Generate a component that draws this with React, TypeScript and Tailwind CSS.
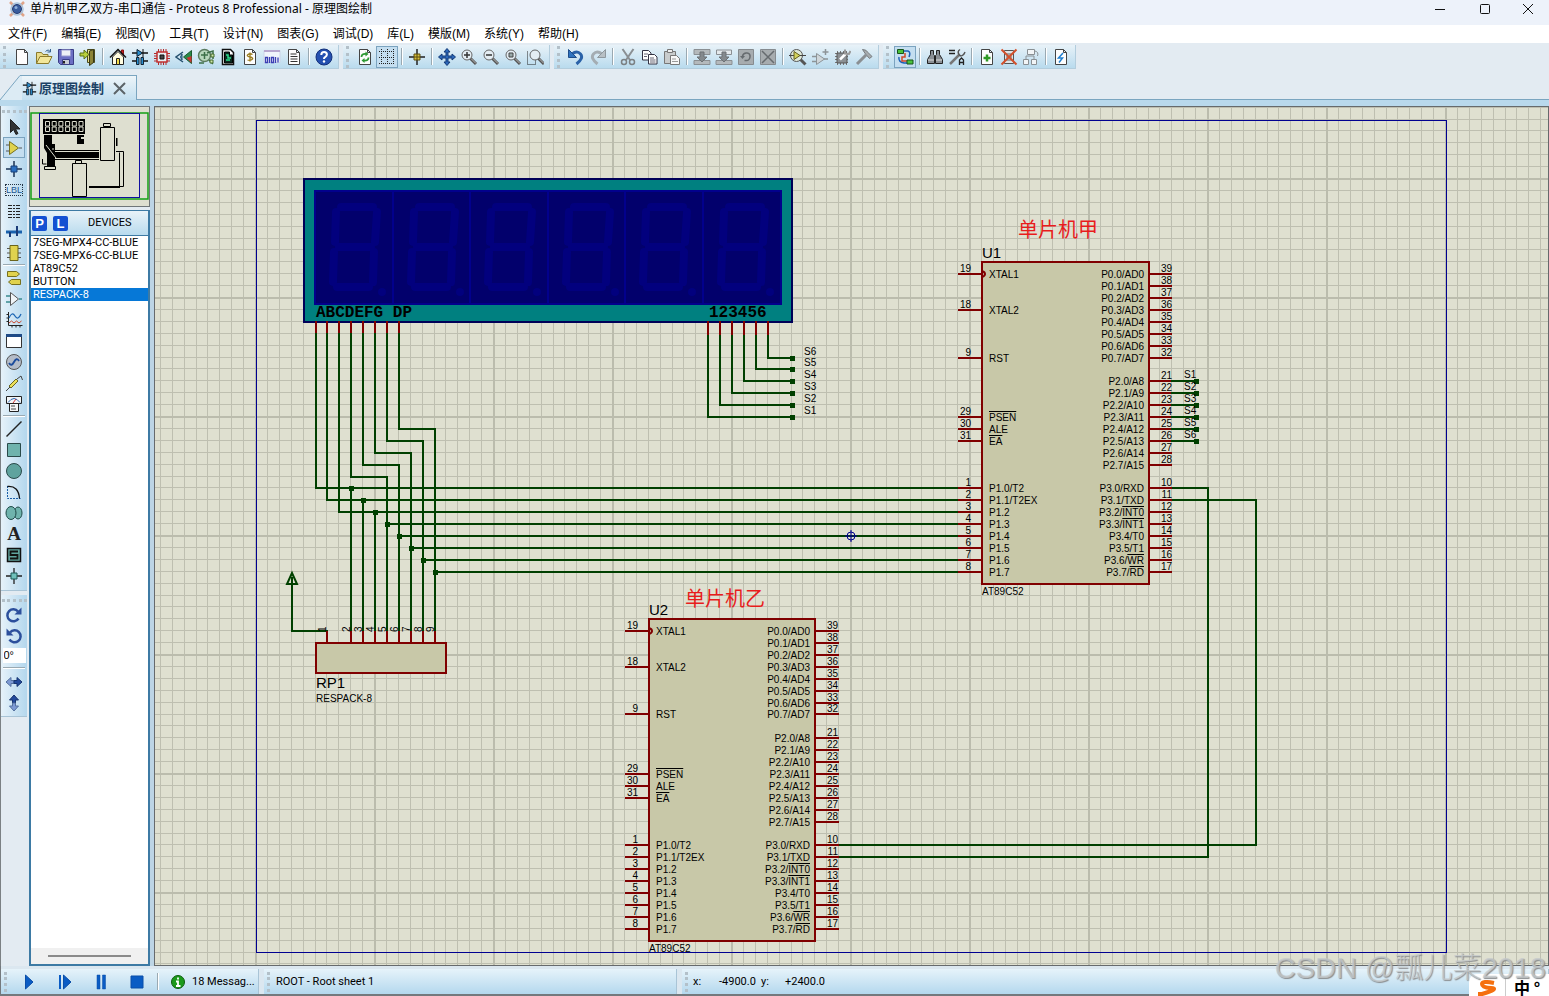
import * as React from "react";

/* ---------- icons ---------- */

function Ico({ children, size = 18 }: { children: React.ReactNode; size?: number }) {
   return (
      <svg width={size} height={size} viewBox="0 0 18 18" fill="none" stroke="#222" strokeWidth="1" aria-hidden="true" className="block shrink-0">
         {children}
      </svg>
   );
}

const page = <path d="M3.5 1.5h8l3 3v12h-11z M11.5 1.5v3h3" fill="#fdfdfd" stroke="#444" />;
const lens = (
   <>
      <path d="M10.5 10.5l5.5 5.5" stroke="#555" strokeWidth="3" />
      <path d="M11 10.5l5 5" stroke="#bbb" strokeWidth="1" />
      <circle cx="7" cy="7" r="5" fill="#e4edf3" stroke="#666" />
   </>
);

const icons: Record<string, React.ReactNode> = {
   new: page,
   open: (
      <>
         <path d="M1.5 15.5v-11h5l1.5 2h5v2" fill="#e9dc8a" stroke="#8a7a2c" />
         <path d="M1.5 15.5l3.5-7h12l-3.5 7z" fill="#f2e79b" stroke="#8a7a2c" />
         <path d="M10.5 3.5q3-3 5 .5m0-3v3h-3" stroke="#35618f" />
      </>
   ),
   save: (
      <>
         <path d="M1.5 1.5h15v15h-13l-2-2z" fill="#6c6fc4" stroke="#3a3d86" />
         <path d="M4.5 2h9v6h-9z" fill="#eef0f6" stroke="#9a9cd0" />
         <path d="M5.5 11.5h7v5h-7z" fill="#c9ccd6" stroke="#3a3d86" />
         <path d="M7 13v2.5" stroke="#222" strokeWidth="2" />
      </>
   ),
   exit: (
      <>
         <path d="M8.5 1.5h7v13h-7z" fill="#e6e08a" stroke="#4a4a1c" />
         <path d="M10.5 3l4-1.5v13l-4 3z" fill="#8c8438" stroke="#3a3a16" />
         <path d="M1 5h4v-3l5 4.5-5 4.5v-3h-4z" fill="#b8cf3c" stroke="#587016" />
      </>
   ),
   home: (
      <>
         <path d="M3.5 9v7.500h11v-7.500l-5.5-5.5z" fill="#fffce0" stroke="#222" />
         <path d="M12.5 6v-4h2v6" fill="#c22" stroke="#811" />
         <path d="M1 9.5l8-8 8 8" stroke="#111" strokeWidth="1.5" />
         <path d="M7.5 10.5h3v6h-3z" fill="#f3dd4a" />
      </>
   ),
   schem: (
      <>
         <path d="M1 5h16M1 13h5M12 13h5" stroke="#111" strokeWidth="1.5" />
         <path d="M6 1.5v7l5.5-3.5z" fill="#2a8fd0" stroke="#123" />
         <path d="M12 1v8" stroke="#111" />
         <path d="M5.5 9.500h2.500v7h-2.500zM10 9.500h2.500v7h-2.500z" fill="#2a8fd0" stroke="#123" />
      </>
   ),
   chip: (
      <>
         <path d="M5.5 1v16M8 1v16M10.5 1v16M13 1v16M1 5.5h16M1 8h16M1 10.5h16M1 13h16" stroke="#b22a2a" />
         <path d="M4 4h10v10h-10z" fill="#e9eef2" stroke="#c03030" strokeWidth="1.5" />
         <path d="M7 7h4v4h-4z" fill="#444" stroke="#111" />
      </>
   ),
   view3d: (
      <>
         <path d="M8 4l-7 5 7 5" stroke="#26506e" strokeWidth="1.5" />
         <path d="M7 6q-3 3 0 6z" fill="#5aa8dc" stroke="#26506e" />
         <path d="M16.5 2.5v13l-8-6.5z" fill="#2a8a4a" stroke="#195a2e" />
         <path d="M16.5 8v7l-5-5z" fill="#c33" stroke="none" />
      </>
   ),
   gerber: (
      <>
         <circle cx="7.5" cy="7.5" r="6" fill="#b9d8bd" stroke="#5c7c60" strokeWidth="1.5" />
         <path d="M4 7h7M7.5 4v7M10 5l6-2v8M12 12l4 4M2 15h5" stroke="#3d7048" strokeWidth="1.5" />
         <path d="M14 6h3v3h-3zM13 12h3v3h-3z" fill="#cfe6ae" stroke="#446c2c" />
      </>
   ),
   design: (
      <>
         <path d="M3.5 1.5h8l3 3v12h-11z" fill="#fff" stroke="#111" strokeWidth="1.5" />
         <path d="M5.5 4h5v3h3v8h-8z" fill="#0a2a20" stroke="#000" />
         <path d="M7 7h2v3h3M7 12h4" stroke="#2fe08c" strokeWidth="1.5" />
      </>
   ),
   bom: (
      <>
         {page}
         <path d="M11.5 6.5q-2.500-1.500-4.500 0t2 2.500 2 2.500-4.500.5M9 4.500v9" stroke="#9a7c1e" strokeWidth="1.300" />
      </>
   ),
   source: (
      <>
         <path d="M1 2.5h16v12h-16z" fill="#f1f4fb" stroke="#ccd4e8" />
         <path d="M1 3h16" stroke="#b8a7cf" strokeWidth="2" />
         <path d="M2.5 9.500h2v5h-2zM8.500 9.500h2v5h-2zM6.500 9v6M12.500 9v6M15 9.500v5" stroke="#3b3fb4" strokeWidth="1.300" />
      </>
   ),
   doc: (
      <>
         {page}
         <path d="M5.5 6h6M5.5 8.500h7M5.5 11h7M5.5 13.500h7" stroke="#333" />
      </>
   ),
   help: (
      <>
         <circle cx="9" cy="9" r="8" fill="#2450b0" stroke="#12307a" />
         <path d="M6.300 7q0-3 2.800-3t2.800 2.500q0 1.500-1.500 2.300t-1.400 2.200" stroke="#fff" strokeWidth="2" />
         <circle cx="9" cy="13.5" r="1.200" fill="#fff" stroke="none" />
      </>
   ),
   redraw: (
      <>
         {page}
         <path d="M5.5 9q0-3.500 4.500-3M12.500 9.500q0 3.500-4.500 3" stroke="#2f9a35" strokeWidth="1.800" />
         <path d="M9.5 3.500l3 2.500-3 2.500zM8.500 10l-3 2.500 3 2.500z" fill="#2f9a35" stroke="none" />
      </>
   ),
   grid: <path d="M1 3.5h16M1 9.5h16M1 15.5h16M3.5 1v16M9.5 1v16M15.5 1v16" stroke="#222" strokeDasharray="1 1" />,
   origin: (
      <>
         <path d="M9 1v16M1 9h16" stroke="#222" strokeWidth="1.5" />
         <path d="M6 6h6v6h-6z" fill="#d6bf3a" stroke="#5a4d10" />
         <path d="M9 6v6M6 9h6" stroke="#5a4d10" />
      </>
   ),
   pan: (
      <path d="M9 .5l3 3.500h-2v4h4v-2l3.500 3-3.500 3v-2h-4v4h2l-3 3.500-3-3.500h2v-4h-4v2l-3.500-3 3.500-3v2h4v-4h-2z" fill="#2c67b8" stroke="#123a78" />
   ),
   zoomIn: (
      <>
         {lens}
         <path d="M4 7h6M7 4v6" stroke="#333" strokeWidth="1.5" />
      </>
   ),
   zoomOut: (
      <>
         {lens}
         <path d="M4 7h6" stroke="#333" strokeWidth="1.5" />
      </>
   ),
   zoomAll: (
      <>
         {lens}
         <path d="M5 5h4v4h-4z" fill="#9aa" stroke="#444" />
      </>
   ),
   zoomArea: (
      <>
         <path d="M1.5 3.500v13h8v-6" stroke="#222" strokeDasharray="1 1" />
         <g transform="translate(2 0)">{lens}</g>
      </>
   ),
   undo: (
      <>
         <path d="M5 6q5-4 8.500 0t-4 10" stroke="#2a62a8" strokeWidth="3" />
         <path d="M1.500 1.500v8h8z" fill="#2f73bf" stroke="#1e4d8a" />
      </>
   ),
   redo: (
      <>
         <path d="M13 6q-5-4-8.500 0t4 10" stroke="#a4adb3" strokeWidth="3" />
         <path d="M16.500 1.500v8h-8z" fill="#b8c0c5" stroke="#8f989e" />
      </>
   ),
   cut: (
      <>
         <path d="M3.5 1l7.500 11M14.500 1l-7.500 11" stroke="#8a8f93" strokeWidth="2" />
         <circle cx="5" cy="14" r="2.500" stroke="#7b8084" strokeWidth="1.5" />
         <circle cx="13" cy="14" r="2.500" stroke="#7b8084" strokeWidth="1.5" />
      </>
   ),
   copy: (
      <>
         <path d="M1.5 2.5h6l2.500 2.500v7h-8.500z" fill="#fff" stroke="#334" />
         <path d="M7.5 6.5h6l2.500 2.500v7h-8.500z" fill="#fff" stroke="#334" />
         <path d="M3 6h4M3 8.500h3M9 10h4M9 12h5.500M9 14h5.500" stroke="#667" />
      </>
   ),
   paste: (
      <>
         <path d="M1.5 3.500h11v12h-11z" fill="#c9cccd" stroke="#777" />
         <path d="M4.5 1.500h5v3h-5z" fill="#eee" stroke="#777" />
         <path d="M7.5 7.500h6l3 3v6h-9z" fill="#f7f7f7" stroke="#777" />
         <path d="M9 11h4M9 13.500h6" stroke="#999" />
      </>
   ),
   blockCopy: (
      <>
         <path d="M1 1.500h16v5h-16zM1 12.500h16v4h-16z" fill="#b4b9bc" stroke="#8a8f93" />
         <path d="M7 4h4v5h3l-5 5-5-5h3z" fill="#84898d" stroke="#6c7175" />
      </>
   ),
   blockMove: (
      <>
         <path d="M1.500 2h15v4.500h-15z" fill="#e4e9ec" stroke="#8a8f93" />
         <path d="M1 12.500h16v4h-16z" fill="#b4b9bc" stroke="#8a8f93" />
         <path d="M7 4h4v5h3l-5 5-5-5h3z" fill="#84898d" stroke="#6c7175" />
      </>
   ),
   blockRotate: (
      <>
         <path d="M1.500 1.500h15v15h-15z" fill="#a7acaf" stroke="#868b8f" />
         <path d="M5.500 8q1-3.500 4.500-3t3 4-3.500 3.500h-2" stroke="#666b6f" strokeWidth="1.5" />
         <path d="M3 8h5l-2.500 3z" fill="#666b6f" stroke="none" />
      </>
   ),
   blockDelete: (
      <>
         <path d="M1.500 1.500h15v15h-15z" fill="#a7acaf" stroke="#868b8f" />
         <path d="M3 3l12 12M15 3l-12 12" stroke="#666b6f" strokeWidth="1.5" />
      </>
   ),
   pick: (
      <>
         <path d="M11.500 11.500l5 5" stroke="#555" strokeWidth="3" />
         <circle cx="7.500" cy="7.500" r="6" fill="#dfe8d8" stroke="#555" />
         <path d="M0 7.500h17" stroke="#444" />
         <path d="M5 3.500v8l6-4z" fill="#d3d25a" stroke="#666020" />
      </>
   ),
   makeDev: (
      <>
         <path d="M5.5 5.500v11l8-5.500z" fill="#cfd6da" stroke="#8d9498" />
         <path d="M1 8.500h4M1 13.500h4M13 11h4M14.500 1v6M11.500 4h6" stroke="#8d9498" strokeWidth="1.5" />
      </>
   ),
   packTool: (
      <>
         <path d="M2 5.500h13M2 8.500h13M2 11.500h13M2 14.500h13M4.500 3v14M7.500 3v14M10.500 3v14M13.500 3v14" stroke="#777" />
         <path d="M4 5h10v10h-10z" fill="#8b9094" stroke="#555" />
         <path d="M7 11.500l6-6" stroke="#fff" strokeWidth="2.500" />
         <path d="M12 1.500l0 4 4 .5 1.500-3" stroke="#999" strokeWidth="2" />
      </>
   ),
   decompose: (
      <>
         <path d="M2 16l9-9" stroke="#8a8f93" strokeWidth="3" />
         <path d="M7.500 1.500q4 0 5.500 3l4 4-2.500 2-4-4.500z" fill="#a6abae" stroke="#777c80" />
      </>
   ),
   autoroute: (
      <>
         <path d="M7 3h5q3 1 1 6M3 9q-1 5 5 6h3" stroke="#1c60b8" strokeWidth="1.5" />
         <path d="M9 5v4h-3v4h5" stroke="#d0482a" strokeWidth="1.5" />
         <path d="M1.500 1.500h6v4h-6zM11 12h6v4h-6z" fill="#49c23c" stroke="#17521a" />
      </>
   ),
   search: (
      <>
         <path d="M4.500 2.500h3v4l1 1v8h-7v-4l3-5zM10.500 2.500h3v4l3 5v4h-7v-8l1-1z" fill="#8a8f94" stroke="#222" />
         <path d="M2 12h6M10 12h6" stroke="#ddd" />
      </>
   ),
   property: (
      <>
         <path d="M1 2.500h6M1 5.500h6" stroke="#222" strokeWidth="1.300" />
         <path d="M2 16l9-9" stroke="#777" strokeWidth="2.500" />
         <path d="M12 1.500q-3 2-1 5t5-.5l1-2" stroke="#555" strokeWidth="1.5" />
         <path d="M11.500 17v-5l2-2 2 2v5M11.500 14.500h4" stroke="#222" strokeWidth="1.300" />
      </>
   ),
   newSheet: (
      <>
         {page}
         <path d="M9 6.500v7M5.500 10h7" stroke="#2f9a25" strokeWidth="2.500" />
      </>
   ),
   removeSheet: (
      <>
         <path d="M4.500 2.500h9v13h-9z" fill="#dfe3e5" stroke="#555" />
         <path d="M6 6h6M6 9h6M6 12h6" stroke="#666" />
         <path d="M1.500 1.500l15 15M16.500 1.500l-15 15" stroke="#d2502c" strokeWidth="2" />
      </>
   ),
   parentSheet: (
      <>
         <path d="M5.500 1.500h7v5h-7zM1.500 11.500h5v5h-5zM9.500 11.500h5v5h-5z" fill="#f2f5f7" stroke="#8a9094" />
         <path d="M4 11v-3h8v3M13 3q4 1 2.500 5" stroke="#8a9094" />
      </>
   ),
   erc: (
      <>
         {page}
         <path d="M11 5l-4.500 5h4l-3.500 4.500" stroke="#1f7fd0" strokeWidth="1.5" />
      </>
   ),
   select: <path d="M5.500 1.500v13l3-3 2.500 5 2-1-2.500-4.500h4.500z" fill="#333" stroke="#222" />,
   component: (
      <>
         <path d="M1 6h3M1 12h3M14 9h3" stroke="#555" />
         <path d="M4.500 2.500v13l9-6.500z" fill="#e0d24e" stroke="#77701e" />
      </>
   ),
   junction: (
      <>
         <path d="M9 1v16M1 9h16" stroke="#1b3354" strokeWidth="1.5" />
         <path d="M6 6h6v6h-6z" fill="#2a6fc0" stroke="#16407a" />
      </>
   ),
   textScript: <path d="M3 3.500h12M3 6.500h12M3 9.500h12M3 12.500h12M3 15.500h12" stroke="#222" strokeDasharray="4 1 2 1" />,
   bus: (
      <>
         <path d="M1 9h16" stroke="#1a62ae" strokeWidth="3" />
         <path d="M5 9v5M12 3v10" stroke="#1a3c78" strokeWidth="2" />
      </>
   ),
   subcircuit: (
      <>
         <path d="M2 4.500h14M2 9h14M2 13.500h14" stroke="#555" />
         <path d="M5 1.500h8v15h-8z" fill="#e0d24e" stroke="#6a641c" />
      </>
   ),
   terminal: <path d="M2.500 2.500h9l3 2.500-3 2.500h-9zM6.500 10.500h9v5h-9l-3-2.500z" fill="#e0d24e" stroke="#77701e" />,
   pin: (
      <>
         <path d="M5.500 2.500v13l8-6.500z" fill="#f0f5f8" stroke="#555" />
         <path d="M1 6h4M1 12h4M14 9h3" stroke="#3a8a8e" strokeWidth="1.5" />
      </>
   ),
   graph: (
      <>
         <path d="M3.500 1v13.500h14M1.500 3.500h2M1.500 7h2M1.500 10.500h2M7 14v2.500M11 14v2.500M15 14v2.500" stroke="#222" />
         <path d="M4 7q3-7 6-2t6-2" stroke="#1c66b4" strokeWidth="1.300" />
         <path d="M4 12l2.500-2 2.500 2 2.500-2 2.500 2 2.500-2" stroke="#c8462e" />
      </>
   ),
   popup: (
      <>
         <path d="M1.500 2.500h15v13h-15z" fill="#fff" stroke="#333" />
         <path d="M1 3.500h16" stroke="#1f4a86" strokeWidth="3" />
      </>
   ),
   generator: (
      <>
         <circle cx="9" cy="9" r="7.500" fill="#b4bcc8" stroke="#555" />
         <path d="M4 10q2.500 4 5-1t5-1" stroke="#1c4c9c" strokeWidth="1.800" />
      </>
   ),
   probe: (
      <>
         <path d="M1 17l4-4M12 5l4-3 1.500 4" stroke="#444" />
         <path d="M4 12l7-7 2 2-7 7z" fill="#ece05a" stroke="#6d6720" />
      </>
   ),
   meter: (
      <>
         <path d="M1.500 1.500h15v7h-15zM4.500 8.500h9v8h-9z" fill="#f4f6f7" stroke="#222" />
         <path d="M3 7.500q6-8 12 0" stroke="#2a66b4" />
         <path d="M8 8l3-4" stroke="#c33" />
         <path d="M6 11h4M6 14h5" stroke="#444" />
      </>
   ),
   line: <path d="M1.500 16.500l15-15" stroke="#222" strokeWidth="1.5" />,
   box: <path d="M2.500 2.500h13v13h-13z" fill="#6fb3ad" stroke="#2a4a4a" />,
   circle: <circle cx="9" cy="9" r="7.500" fill="#5fa39e" stroke="#2a4a4a" />,
   arc: (
      <>
         <path d="M2.500 3v12.500h13" stroke="#1a5fa8" strokeDasharray="2 1" />
         <path d="M2.500 3.500q11-1 12 12" stroke="#111" strokeWidth="1.300" />
      </>
   ),
   path2d: (
      <>
         <ellipse cx="13" cy="9" rx="4" ry="6" fill="#6fb3ad" stroke="#1f4a48" />
         <ellipse cx="6" cy="9" rx="5" ry="6.500" fill="#6fb3ad" stroke="#1f4a48" />
      </>
   ),
   marker: (
      <>
         <path d="M9 1v16M1 9h16" stroke="#222" strokeWidth="1.300" />
         <path d="M6 6h6v6h-6z" fill="#6fc0ba" stroke="#1f5a58" />
      </>
   ),
   symbol: (
      <>
         <path d="M2.500 2.500h13v13h-13z" fill="#5fa39e" stroke="#111" strokeWidth="1.5" />
         <path d="M13 5.500h-7.500v3.500h7v3.500h-7.500" stroke="#111" strokeWidth="1.800" />
      </>
   ),
   rotCw: (
      <>
         <path d="M13.500 12.500a6 6 0 1 1-.5-7" stroke="#2c4f9c" strokeWidth="2.500" />
         <path d="M16.500 1.500v7h-7z" fill="#2c4f9c" stroke="none" />
      </>
   ),
   rotCcw: (
      <>
         <path d="M4.500 12.500a6 6 0 1 0 .5-7" stroke="#2c4f9c" strokeWidth="2.500" />
         <path d="M1.500 1.500v7h7z" fill="#2c4f9c" stroke="none" />
      </>
   ),
   flipH: (
      <>
         <path d="M1 9l5-4.500v3h3v3h-3v3z" fill="#7d9ad4" stroke="#54719f" />
         <path d="M17 9l-5-4.500v3h-3v3h3v3z" fill="#234a9c" stroke="#173470" />
      </>
   ),
   flipV: (
      <>
         <path d="M9 1l4.500 5h-3v3h-3v-3h-3z" fill="#234a9c" stroke="#173470" />
         <path d="M9 17l4.500-5h-3v-3h-3v3h-3z" fill="#7d9ad4" stroke="#54719f" />
      </>
   ),
   play: <path d="M5.500 2l7.500 7-7.500 7z" fill="#0a5cc4" stroke="#0a4ea8" />,
   step: (
      <>
         <path d="M4 2v14" stroke="#0a5cc4" strokeWidth="2" />
         <path d="M7.500 2v14l7.500-7z" fill="#0a5cc4" stroke="#0a4ea8" />
      </>
   ),
   pause: <path d="M5 2h3v14h-3zM10.500 2h3v14h-3z" fill="#0a5cc4" stroke="#0a4ea8" strokeWidth="0.500" />,
   stop: <path d="M3 3h12v12h-12z" fill="#0a5cc4" stroke="#0a4ea8" />,
};

const toolGroups: string[][] = [
   ["new", "open", "save", "exit", "|", "home", "schem", "chip", "view3d", "gerber", "design", "bom", "source", "doc", "|", "help"],
   ["redraw", "*grid", "|", "origin", "|", "pan", "zoomIn", "zoomOut", "zoomAll", "zoomArea"],
   ["undo", "redo", "|", "cut", "copy", "paste", "|", "blockCopy", "blockMove", "blockRotate", "blockDelete", "|", "pick", "makeDev", "packTool", "decompose"],
   ["*autoroute", "|", "search", "property", "|", "newSheet", "removeSheet", "parentSheet", "|", "erc"],
];

const modeTools = [
   "select", "*component", "junction", "label", "textScript", "bus", "subcircuit", "|",
   "terminal", "pin", "graph", "popup", "generator", "probe", "meter", "|",
   "line", "box", "circle", "arc", "path2d", "text", "symbol", "marker",
];

const menus = ["文件(F)", "编辑(E)", "视图(V)", "工具(T)", "设计(N)", "图表(G)", "调试(D)", "库(L)", "模版(M)", "系统(Y)", "帮助(H)"];
const devices = ["7SEG-MPX4-CC-BLUE", "7SEG-MPX6-CC-BLUE", "AT89C52", "BUTTON", "RESPACK-8"];

function TitleBar() {
   return (
      <header className="flex h-[25px] shrink-0 items-start bg-[#edf2fa] pl-2 text-[12px] leading-[18px] text-black">
         <Ico>
            <path d="M2 2l4 4M16 2l-4 4M2 16l4-4M16 16l-4-4" stroke="#e0a488" strokeWidth="2.500" />
            <circle cx="9" cy="9" r="6" stroke="#a9c3dc" strokeWidth="1.5" />
            <circle cx="9" cy="9" r="4.500" fill="#3a5c9c" stroke="#223c74" />
            <circle cx="8" cy="7.500" r="1.500" fill="#8fb0dc" stroke="none" />
         </Ico>
         <h1 className="ml-1">单片机甲乙双方-串口通信 - Proteus 8 Professional - 原理图绘制</h1>
         <div className="ml-auto flex">
            <button aria-label="Minimize" className="grid h-[18px] w-[45px] place-items-center">
               <svg width="10" height="10" stroke="#111"><path d="M0 5.5h10" /></svg>
            </button>
            <button aria-label="Maximize" className="grid h-[18px] w-[45px] place-items-center">
               <svg width="10" height="10" fill="none" stroke="#111"><rect x="0.5" y="0.5" width="9" height="9" rx="1" /></svg>
            </button>
            <button aria-label="Close" className="grid h-[18px] w-[42px] place-items-center">
               <svg width="10" height="10" stroke="#111"><path d="M0 0l10 10M10 0l-10 10" /></svg>
            </button>
         </div>
      </header>
   );
}

function ToolButton({ name, className }: { name: string; className: string }) {
   const on = name.startsWith("*");
   const key = on ? name.slice(1) : name;
   return (
      <button
         aria-label={key}
         aria-pressed={on}
         className={`grid place-items-center ${className} ${on ? "border border-[#7ba3bf] bg-[#c4def0]" : ""}`}>
         {key === "label" ? (
            <span className="border border-dotted border-[#234] font-['Liberation_Sans'] text-[9px] leading-[10px] text-[#1b5590]">LBL</span>
         ) : key === "text" ? (
            <span className="font-['Liberation_Serif'] text-[19px] leading-[20px] font-bold text-[#222]">A</span>
         ) : (
            <Ico>{icons[key]}</Ico>
         )}
      </button>
   );
}

function Toolbars() {
   return (
      <div className="flex h-[29px] shrink-0 gap-1 pt-[2px] pb-[3px]">
         {toolGroups.map((group, i) => (
            <div key={i} role="toolbar" className="flex items-center border-r border-b border-[#b3cddd] bg-linear-to-b from-[#e8f2f8] to-[#b9dbee] pr-[3px]">
               <div className="mr-[5px] ml-[3px] h-[22px] border-l-[3px] border-dotted border-[#b3c0c9]" />
               {group.map((name, j) =>
                  name === "|" ? (
                     <div key={j} className="mx-[3px] h-[17px] w-[2px] border-r border-l border-r-white border-l-[#9aa9b2]" />
                  ) : (
                     <ToolButton key={j} name={name} className="h-[22px] w-[22px]" />
                  )
               )}
            </div>
         ))}
      </div>
   );
}

function TabStrip() {
   return (
      <div className="shrink-0">
         <div className="flex h-[28px] items-end border-b border-[#7aa5c0]">
            <div className="-mb-px flex h-[25px] items-stretch">
               <svg width="22" height="25" className="block">
                  <path d="M0 25L20 0.5H22V25z" fill="#dcebf4" />
                  <path d="M0 25L20 0.5H22" fill="none" stroke="#7aa5c0" />
               </svg>
               <div className="flex items-center border-t border-r border-[#7aa5c0] bg-linear-to-b from-[#eef5f9] to-[#c2dff0]">
                  <Ico size={15}>{icons.schem}</Ico>
                  <span className="ml-[2px] text-[13px] leading-[20px] font-bold text-[#1c4266]">原理图绘制</span>
                  <button aria-label="Close tab" className="mr-[10px] ml-[9px]">
                     <svg width="13" height="13" stroke="#5c6468" strokeWidth="2"><path d="M1 1l11 11M12 1l-11 11" /></svg>
                  </button>
               </div>
            </div>
         </div>
         <div className="h-[6px] bg-[#b9d9ec]" />
      </div>
   );
}

function ModeBar() {
   return (
      <nav className="w-[29px] shrink-0 border-l border-[#7b8084] bg-[#e3ebf2] pr-[2px]">
         <div className="flex flex-col items-center border-b border-[#a9c4d6] bg-linear-to-r from-[#e6f2fa] to-[#b4d7ed] pb-[4px]">
            <div className="mt-[4px] mb-[3px] w-[25px] border-t-[3px] border-dotted border-[#b3c0c9]" />
            {modeTools.map((name, i) =>
               name === "|" ? (
                  <div key={i} className="my-px h-[2px] w-[22px] border-t border-b border-t-[#9aa9b2] border-b-white" />
               ) : (
                  <ToolButton key={i} name={name} className="h-[21px] w-[22px]" />
               )
            )}
         </div>
         <div className="mt-[4px] flex flex-col items-center border-b border-[#a9c4d6] bg-linear-to-r from-[#e6f2fa] to-[#b4d7ed] pb-[3px]">
            <div className="mt-[4px] mb-[2px] w-[25px] border-t-[3px] border-dotted border-[#b3c0c9]" />
            <ToolButton name="rotCw" className="h-[21px] w-[22px]" />
            <ToolButton name="rotCcw" className="h-[21px] w-[22px]" />
            <input
               aria-label="Rotation angle"
               defaultValue="0°"
               className="my-[2px] h-[15px] w-[23px] bg-white px-px font-['Liberation_Sans'] text-[11px] leading-[15px]"
            />
            <div className="my-[2px] h-[2px] w-[22px] border-t border-b border-t-[#9aa9b2] border-b-white" />
            <ToolButton name="flipH" className="h-[21px] w-[22px]" />
            <ToolButton name="flipV" className="h-[21px] w-[22px]" />
         </div>
      </nav>
   );
}

function Overview() {
   return (
      <svg width="119" height="98" className="block">
         <rect x="1" y="6" width="117" height="86" fill="none" stroke="#14a014" strokeWidth="1.5" />
         <rect x="9.5" y="6.5" width="100" height="84" fill="none" stroke="#1010a0" />
         <rect x="13" y="12" width="42" height="15" fill="#000" />
         {[0, 1, 2, 3, 4, 5].map((i) => (
            <path key={i} d={`M${15.5 + i * 6.7} 14.500h4v4.500h-4zM${15.5 + i * 6.7} 20h4v4.500h-4z`} fill="none" stroke="#dedfd0" />
         ))}
         <path d="M14 28h8v9h3v8h44v6h-44v8h-8v-13l-3-5zM47 28h7v2h-3v2h3v5h-7zM86 31h1.500v8h-1.500z" fill="#000" />
         <path d="M16 38l10 13M22 42h2" stroke="#dedfd0" />
         <path d="M25 43.500h44M25 52.500h44" stroke="#000" />
         <path d="M12.500 52v5h4M14.500 59.500h11v3h-11zM42.500 56.500h14v33h-14zM45.500 53.500h6v3h-6zM70.500 20.500h14v33h-14zM73.500 16.500h7v3h-7zM86 44.500h7.500v35h-4v-34" fill="#dedfd0" stroke="#000" />
         <path d="M59 80h31" stroke="#000" strokeWidth="2" />
      </svg>
   );
}

function DevicePanel() {
   const [selected, setSelected] = React.useState("RESPACK-8");
   return (
      <aside className="flex w-[121px] shrink-0 flex-col">
         <div className="h-[101px] shrink-0 overflow-hidden border border-[#6f7679] bg-[#dedfd0]">
            <Overview />
         </div>
         <div className="mt-[3px] flex min-h-0 flex-1 flex-col border-2 border-t border-[#3d7aa4] bg-white">
            <div className="flex h-[24px] shrink-0 items-center bg-linear-to-b from-[#e8f2f8] to-[#b9dbee] pl-px font-['Liberation_Sans'] text-[12px] text-black">
               <button aria-label="Pick devices" className="h-[15px] w-[15px] rounded-[2px] bg-[#1450d2] text-[13px] leading-[15px] font-bold text-white">P</button>
               <button aria-label="Manage libraries" className="ml-[6px] h-[15px] w-[15px] rounded-[2px] bg-[#1450d2] text-[13px] leading-[15px] font-bold text-white">L</button>
               <h2 className="ml-[20px] pt-px font-['Roboto'] text-[11px]">DEVICES</h2>
            </div>
            <ul className="flex-1 border-t border-[#3d7aa4] font-['Roboto'] text-[11px] leading-[13px] whitespace-nowrap">
               {devices.map((name) => (
                  <li key={name}>
                     <button
                        onClick={() => setSelected(name)}
                        className={`block h-[13px] w-full pl-[2px] text-left ${selected === name ? "bg-[#0678d7] text-white" : "text-black"}`}>
                        {name}
                     </button>
                  </li>
               ))}
            </ul>
            <div className="flex h-[16px] shrink-0 items-center bg-[#f0f0f0] px-[17px]">
               <div className="h-[2px] w-full bg-[#8a8a8a]" />
            </div>
         </div>
      </aside>
   );
}

/* ---------- schematic ---------- */

// Everything on the sheet sits on an 11.9px grid around the sheet origin.
const PITCH = 11.9;
const gx = (n: number) => 696 + Math.round(n * PITCH);
const gy = (n: number) => 429 + Math.sign(n) * Math.ceil(Math.abs(n) * PITCH - 0.5);

const WIRE = "#004000";
const PART = "#800000";

function Wire({ pts, color = WIRE }: { pts: [number, number][]; color?: string }) {
   return <polyline points={pts.map(([x, y]) => `${gx(x)},${gy(y)}`).join(" ")} fill="none" stroke={color} strokeWidth="2" strokeLinecap="square" />;
}

function Dot({ x, y }: { x: number; y: number }) {
   return <rect x={gx(x) - 2} y={gy(y) - 2} width="5" height="5" fill={WIRE} />;
}

type Pin = [row: number, num: number, name: string];

const leftPins: Pin[] = [
   [0, 19, "XTAL1"], [3, 18, "XTAL2"], [7, 9, "RST"],
   [12, 29, "~PSEN"], [13, 30, "ALE"], [14, 31, "~EA"],
   [18, 1, "P1.0/T2"], [19, 2, "P1.1/T2EX"], [20, 3, "P1.2"], [21, 4, "P1.3"],
   [22, 5, "P1.4"], [23, 6, "P1.5"], [24, 7, "P1.6"], [25, 8, "P1.7"],
];

const rightPins: Pin[] = [
   ...[0, 1, 2, 3, 4, 5, 6, 7].map((i): Pin => [i, 39 - i, `P0.${i}/AD${i}`]),
   ...[0, 1, 2, 3, 4, 5, 6, 7].map((i): Pin => [9 + i, 21 + i, `P2.${i}/A${8 + i}`]),
   [18, 10, "P3.0/RXD"], [19, 11, "P3.1/TXD"], [20, 12, "P3.2/~INT0"], [21, 13, "P3.3/~INT1"],
   [22, 14, "P3.4/T0"], [23, 15, "P3.5/T1"], [24, 16, "P3.6/~WR"], [25, 17, "P3.7/~RD"],
];

// "~" starts the active-low part of a pin name
function PinName({ name }: { name: string }) {
   const [plain, barred] = name.split("~");
   return (
      <>
         {plain}
         {barred ? <tspan className="overline">{barred}</tspan> : null}
      </>
   );
}

function Mcu({ x, y, id }: { x: number; y: number; id: string }) {
   const left = gx(x);
   const right = gx(x + 14);
   return (
      <g>
         <rect x={left} y={gy(y - 1)} width={right - left} height={gy(y + 26) - gy(y - 1)} fill="#c8c8a8" stroke={PART} strokeWidth="2" />
         <path d={`M${left} ${gy(y) - 3}q3 1 3 3t-3 3`} fill="none" stroke={PART} strokeWidth="2" />
         {leftPins.map(([row, num, name]) => (
            <g key={num}>
               <path d={`M${gx(x - 2)} ${gy(y + row)}H${left}`} stroke={PART} strokeWidth="2" />
               <text x={left - 11} y={gy(y + row) - 2} textAnchor="end">{num}</text>
               <text x={left + 7} y={gy(y + row) + 4}><PinName name={name} /></text>
            </g>
         ))}
         {rightPins.map(([row, num, name]) => (
            <g key={num}>
               <path d={`M${right} ${gy(y + row)}H${gx(x + 16)}`} stroke={PART} strokeWidth="2" />
               <text x={right + 23} y={gy(y + row) - 2} textAnchor="end">{num}</text>
               <text x={right - 5} y={gy(y + row) + 4} textAnchor="end"><PinName name={name} /></text>
            </g>
         ))}
         <text x={left} y={gy(y - 1) - 4} className="text-[15px]">{id}</text>
         <text x={left} y={gy(y + 26) + 11}>AT89C52</text>
      </g>
   );
}

function Display() {
   return (
      <g>
         <rect x={gx(-46)} y={gy(-30)} width={gx(-5) - gx(-46)} height={gy(-18) - gy(-30)} fill="#008080" stroke="#000058" strokeWidth="2" />
         <rect x="160" y="84" width="466" height="113" fill="#02006c" stroke="#02008c" strokeWidth="2" />
         {[0, 78, 155, 233, 310, 388].map((dx) => (
            <g key={dx} transform={`translate(${160 + dx} 84)`}>
               {dx > 0 ? <path d="M0 0v113" stroke="#02008c" strokeWidth="2" /> : null}
               <g stroke="#02007e" strokeWidth="8" strokeLinecap="round" fill="none">
                  <path d="M26 16h32M24 56h32M22 96h32M21 21l-1 30M62 21l-2 30M19 61l-1 30M59 61l-1 30" />
               </g>
               <circle cx="67" cy="101" r="4" fill="#02007e" />
            </g>
         ))}
         <g className="fill-black font-['Liberation_Mono'] text-[16px] font-bold">
            <text x="161" y="210" xmlSpace="preserve">ABCDEFG DP</text>
            <text x="554" y="210">123456</text>
         </g>
      </g>
   );
}

const eight = [0, 1, 2, 3, 4, 5, 6, 7];
const six = [0, 1, 2, 3, 4, 5];
const gridSteps = [12, 24, 36, 48, 60, 71, 83, 95, 107];

function Schematic() {
   return (
      <svg width="100%" height="100%" role="img" aria-label="Root sheet 1" className="block fill-black font-['Liberation_Sans','Noto_Sans_CJK_SC',sans-serif] text-[10px]">
         <defs>
            <pattern id="grid" x={gx(0) - 1} y={gy(0) - 1} width="119" height="119" patternUnits="userSpaceOnUse">
               <rect width="119" height="119" fill="#dfe0d0" />
               {gridSteps.map((s) => (
                  <path key={s} d={`M${s + 0.5} 0v119M0 ${s + 0.5}h119`} stroke="#bebfb0" />
               ))}
               <path d="M1 0v119M0 1h119" stroke="#bbbcad" strokeWidth="2" />
            </pattern>
         </defs>
         <rect width="100%" height="100%" fill="url(#grid)" />
         <rect x={gx(-50) + 0.5} y={gy(-35) + 0.5} width="1190" height="832" fill="none" stroke="#000090" />

         <Display />
         {eight.map((i) => (
            <Wire key={i} pts={[[-45 + i, -18], [-45 + i, -17]]} color={PART} />
         ))}
         {[0, 1, 2].map((i) => (
            <g key={i}>
               <Wire pts={[[-45 + i, -17], [-45 + i, -4 + i], [9, -4 + i]]} />
               <Wire pts={[[-42 + i, -4 + i], [-42 + i, 8]]} />
            </g>
         ))}
         {[0, 1, 2, 3, 4].map((i) => (
            <g key={i}>
               <Wire pts={[[-42 + i, -17], [-42 + i, -5 - i], [-39 + i, -5 - i], [-39 + i, 8]]} />
               <Wire pts={[[-39 + i, -1 + i], [9, -1 + i]]} />
            </g>
         ))}
         {eight.map((i) => (
            <Dot key={i} x={-42 + i} y={-4 + i} />
         ))}

         {six.map((i) => (
            <g key={i}>
               <Wire pts={[[-12 + i, -17], [-12 + i, -10 - i], [-5, -10 - i]]} />
               <Wire pts={[[-12 + i, -18], [-12 + i, -17]]} color={PART} />
               <Dot x={-5} y={-10 - i} />
               <text x={gx(-5) + 12} y={gy(-10 - i) - 3}>S{i + 1}</text>
            </g>
         ))}

         {/* pull-up pack */}
         <Wire pts={[[-47, 3.5], [-47, 8], [-44, 8]]} />
         <path d={`M${gx(-47)} ${gy(3) + 1}l-5 11h10z`} fill="none" stroke={WIRE} strokeWidth="2" />
         <rect x={gx(-45)} y={gy(9)} width={gx(-34) - gx(-45)} height="30" fill="#c8c8a8" stroke={PART} strokeWidth="2" />
         {[-44, -42, -41, -40, -39, -38, -37, -36, -35].map((x, i) => (
            <g key={x}>
               <path d={`M${gx(x)} ${gy(8)}V${gy(9)}`} stroke={PART} strokeWidth="2" />
               <text transform={`translate(${gx(x) - 1} ${gy(8) + 1}) rotate(-90)`}>{i + 1}</text>
            </g>
         ))}
         <text x={gx(-45)} y="581" className="text-[15px]">RP1</text>
         <text x={gx(-45)} y="595">RESPACK-8</text>

         {/* serial link */}
         <Wire pts={[[27, -4], [30, -4], [30, 27], [-1, 27]]} />
         <Wire pts={[[27, -3], [34, -3], [34, 26], [-1, 26]]} />

         <Mcu x={11} y={-22} id="U1" />
         <Mcu x={-17} y={8} id="U2" />
         <g className="fill-[#e81c1c] text-[20px]">
            <text x="863" y="130">单片机甲</text>
            <text x="530" y="499">单片机乙</text>
         </g>
         {six.map((i) => (
            <g key={i}>
               <Wire pts={[[27, -13 + i], [29, -13 + i]]} />
               <Dot x={29} y={-13 + i} />
               <text x={gx(28)} y={gy(-13 + i) - 3}>S{i + 1}</text>
            </g>
         ))}

         <circle cx={gx(0)} cy={gy(0)} r="4" fill="none" stroke="#000090" />
         <path d={`M${gx(0)} ${gy(0) - 6}v12M${gx(0) - 6} ${gy(0)}h12`} stroke="#000090" />
      </svg>
   );
}

function StatusBar() {
   const bar = "flex h-[25px] items-center border-r border-[#a9c4d6] bg-linear-to-b from-[#e6f3fa] to-[#b4d8ee]";
   const grip = "ml-[3px] h-[20px] border-l-[3px] border-dotted border-[#b3c0c9]";
   return (
      <footer className="flex h-[30px] shrink-0 items-start gap-[5px] border-b-2 border-l border-[#74797d] bg-[#dbe7f0] pt-[3px] font-['Roboto'] text-[11px] text-black">
         <div className={`${bar} w-[258px]`}>
            <div className={grip} />
            <div className="ml-[4px] flex">
               {["play", "step", "pause", "stop"].map((name) => (
                  <ToolButton key={name} name={name} className="h-[24px] w-[36px]" />
               ))}
            </div>
            <div className="ml-[2px] h-[17px] w-[2px] border-r border-l border-r-white border-l-[#9aa9b2]" />
            <svg width="14" height="14" viewBox="0 0 14 14" className="ml-[12px]">
               <circle cx="7" cy="7" r="6.500" fill="#1b9a1b" stroke="#0d5c0d" />
               <path d="M7 2.500v2M5 6.500h2v4M5 11h4.500" stroke="#fff" strokeWidth="1.800" fill="none" />
            </svg>
            <button className="ml-[7px] pt-[2px]">18 Messag...</button>
         </div>
         <div className={`${bar} w-[413px]`}>
            <div className={grip} />
            <span className="ml-[6px] pt-[2px]">ROOT - Root sheet 1</span>
         </div>
         <div className={`${bar} flex-1`}>
            <div className={grip} />
            <span className="ml-[5px] w-[26px] pt-[2px]">x:</span>
            <span className="w-[42px] pt-[2px]">-4900.0</span>
            <span className="w-[24px] pt-[2px]">y:</span>
            <span className="pt-[2px]">+2400.0</span>
         </div>
      </footer>
   );
}

export default function App() {
   return (
      <div className="relative flex h-screen flex-col overflow-hidden bg-[#e3ebf2] font-['Noto_Sans','Noto_Sans_CJK_SC',sans-serif]">
         <TitleBar />
         <nav className="flex h-[18px] shrink-0 items-center gap-[14px] bg-white pl-2 font-['Liberation_Sans','Noto_Sans_CJK_SC',sans-serif] text-[12px] leading-[18px] text-black">
            {menus.map((label) => (
               <button key={label}>{label}</button>
            ))}
         </nav>
         <Toolbars />
         <TabStrip />
         <main className="flex min-h-0 flex-1">
            <ModeBar />
            <DevicePanel />
            <div className="w-[4px] shrink-0 bg-[#bdd5e5]" />
            <div className="min-w-0 flex-1 overflow-hidden border border-[#666a6c]">
               <Schematic />
            </div>
         </main>
         <StatusBar />

         <div className="absolute right-0 bottom-0 flex h-[22px] w-[80px] items-end overflow-hidden rounded-tl-lg bg-white">
            <svg width="20" height="16" viewBox="0 0 20 16" className="ml-[8px]" fill="none" stroke="#f5700f" strokeWidth="4">
               <path d="M17 3q-12-2.500-12 1t9 4-9 6h-4" />
            </svg>
            <div className="mx-[8px] h-[18px] w-px bg-[#ccc]" />
            <span className="font-['Noto_Sans_CJK_SC',sans-serif] text-[16px] leading-[18px] font-bold whitespace-nowrap text-black">中 °</span>
         </div>
         <p className="pointer-events-none absolute right-[3px] bottom-[8px] font-['Liberation_Sans','Noto_Sans_CJK_SC',sans-serif] text-[29px] leading-[40px] font-light whitespace-nowrap text-[#c6cacc]/80 [text-shadow:1px_1px_1px_#8a8d8f]">
            CSDN @瓢儿菜2018
         </p>
      </div>
   );
}
